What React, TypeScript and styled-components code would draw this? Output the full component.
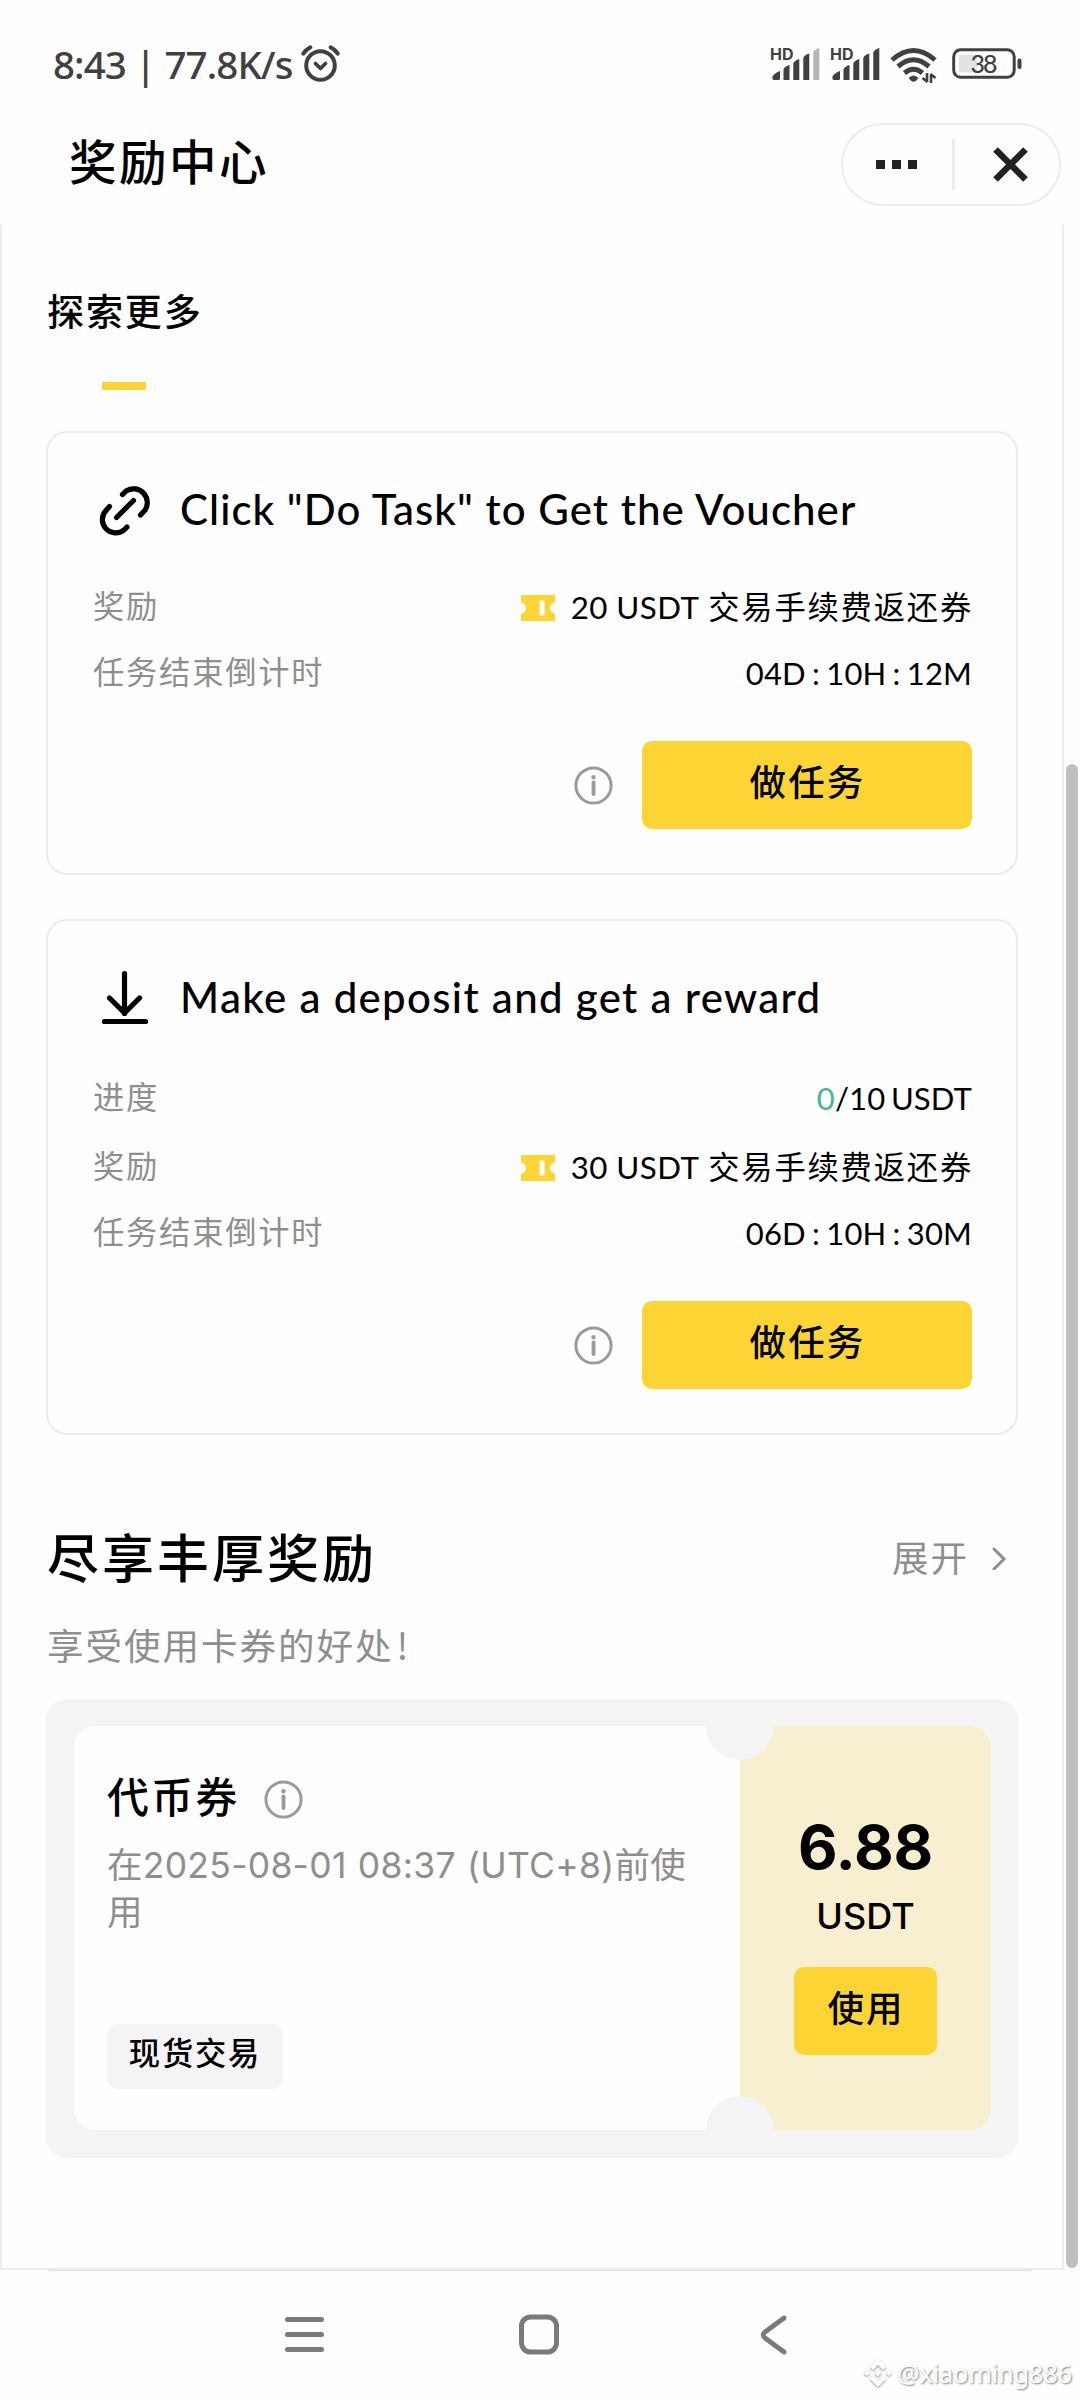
import React from "react";
import styled, { createGlobalStyle } from "styled-components";

const ui = `Lato, "Noto Sans CJK SC", sans-serif`;
const wide = `Inter, "Noto Sans CJK SC", sans-serif`;
const cjk = `"Noto Sans CJK SC", sans-serif`;

const GlobalStyle = createGlobalStyle`
  * { box-sizing: border-box; }
  body { margin: 0; background: #fefefe; }
  svg { display: block; flex: none; }
`;

const Screen = styled.div`
  width: 1080px;
  height: 2400px;
  display: flex;
  flex-direction: column;
  background: #fefefe;
  color: #000;
  font-family: ${ui};
  overflow: hidden;
  white-space: nowrap;
`;

const StatusBar = styled.header`
  height: 123px;
  padding: 36px 57px 0 53px;
  display: flex;
  justify-content: space-between;
  align-items: flex-start;
  color: #404040;
`;

const StatusLeft = styled.div`
  display: flex;
  align-items: center;
  height: 56px;
  font: 500 38.5px/56px "Noto Sans", ${cjk};
`;

const StatusClock = styled.span`
  display: inline-block;
  width: 247px;
  letter-spacing: -0.9px;
`;

const StatusRight = styled.div`
  display: flex;
  padding-top: 9px;
  align-items: flex-start;
`;

const SignalGroup = styled.span`
  display: grid;
  width: 60px;
  height: 37px;
  > * { grid-area: 1 / 1; }
`;

const HdLabel = styled.span`
  font: 700 16px/16px Inter, sans-serif;
  padding-top: 1px;
`;

const StatusSlot = styled.span<{ $right?: number }>`
  padding-top: 2px;
  margin-right: ${(p) => p.$right ?? 0}px;
`;

const HeaderBar = styled.div`
  height: 102px;
  padding: 0 19px 0 69px;
  display: flex;
  justify-content: space-between;
`;

const PageTitle = styled.h1`
  margin: 0;
  font: 500 47.5px/74px ${cjk};
  letter-spacing: 2.5px;
`;

const Capsule = styled.div`
  width: 220px;
  height: 83px;
  border: 2px solid #ececec;
  border-radius: 42px;
  display: flex;
  align-items: center;
`;

const CapsuleHalf = styled.div<{ $width: number; $pad: number }>`
  width: ${(p) => p.$width}px;
  display: flex;
  gap: 7px;
  padding-left: ${(p) => p.$pad}px;
`;

const CapsuleDot = styled.i`
  width: 9px;
  height: 9px;
  background: #222;
`;

const CapsuleDivider = styled.i`
  width: 3px;
  height: 51px;
  background: #ececec;
`;

const Viewport = styled.div`
  height: 2045px;
  display: flex;
`;

const Page = styled.main`
  width: 1064px;
  border: 2px solid #ececec;
  border-top: 0;
  padding: 56px 44px 0;
  display: flex;
  flex-direction: column;
`;

const ScrollTrack = styled.div`
  flex: 1;
  padding: 539px 2px 2px 2px;
`;

const ScrollThumb = styled.div`
  height: 1504px;
  border-radius: 6px;
  background: #bfbfbf;
`;

const Tab = styled.div`
  display: flex;
  flex-direction: column;
  align-items: center;
  width: 156px;
  height: 150px;
  gap: 43px;
`;

const TabText = styled.div`
  font: 500 37px/58px ${cjk};
  letter-spacing: 1.9px;
  width: 100%;
  padding-left: 1px;
`;

const TabBar = styled.i`
  width: 44px;
  height: 8px;
  background: #fcd535;
`;

const CardList = styled.div`
  display: flex;
  flex-direction: column;
  gap: 44px;
`;

const Card = styled.section`
  border: 2px solid #ececec;
  border-radius: 21px;
  padding: 46px 44px 44px 45px;
`;

const CardHead = styled.div`
  display: flex;
  align-items: center;
  height: 62px;
  margin-bottom: 33px;
  gap: 25px;
`;

const CardTitle = styled.h2<{ $spacing: number }>`
  margin: 0 0 2px;
  font: 500 42px/62px ${ui};
  letter-spacing: ${(p) => p.$spacing}px;
`;

const Row = styled.div<{ $height?: number }>`
  height: ${(p) => p.$height ?? 66}px;
  display: flex;
  align-items: center;
  justify-content: space-between;
  line-height: 66px;
`;

const RowLabel = styled.span`
  font: 400 31.3px/60px ${cjk};
  letter-spacing: 1.75px;
  color: #8e8e8e;
  margin-top: -4px;
`;

const RowValue = styled.span`
  display: flex;
  align-items: center;
  font-size: 31px;
`;

const Measure = styled.span<{ $gap: number }>`
  font-size: 31px;
  word-spacing: ${(p) => p.$gap}px;
  letter-spacing: 0.15px;
`;

const VoucherName = styled.span`
  margin: -2px -1px 0 16px;
  font-family: ${cjk};
  font-size: 31.3px;
  letter-spacing: 1.8px;
`;

const VoucherAmount = styled.span`
  font-family: ${ui};
  letter-spacing: 0.45px;
`;

const Done = styled.span`
  color: #4ab58f;
`;

const Actions = styled.div`
  margin-top: 35px;
  display: flex;
  justify-content: flex-end;
  align-items: center;
  gap: 29px;
`;

const Button = styled.button<{ $width: number }>`
  width: ${(p) => p.$width}px;
  height: 88px;
  padding: 0 0 9px 1px;
  border: 0;
  border-radius: 10px;
  background: #fcd535;
  color: #000;
  font: 500 36.5px/56px ${cjk};
  letter-spacing: 2.1px;
`;

const SectionHead = styled.div`
  margin-top: 82px;
  height: 80px;
  padding: 0 10px 0 1px;
  display: flex;
  align-items: center;
  justify-content: space-between;
`;

const SectionTitle = styled.h2`
  margin: -3px 0 0;
  font: 500 52px/78px ${cjk};
  letter-spacing: 3px;
`;

const Expand = styled.a`
  display: flex;
  align-items: center;
  gap: 21px;
  color: #8e8e8e;
  font: 400 36.5px/56px ${cjk};
  letter-spacing: 2px;
`;

const SectionNote = styled.p`
  margin: 18px 0 0;
  padding-left: 1px;
  height: 84px;
  font: 400 36.5px/60px ${cjk};
  letter-spacing: 2px;
  color: #8e8e8e;
`;

const Bang = styled.span`
  margin-left: 3px;
`;

const Panel = styled.section`
  background: #f4f4f4;
  border-radius: 21px;
  height: 459px;
  padding: 27px 27px 28px 28px;
  display: flex;
`;

const Coupon = styled.div`
  position: relative;
  flex: 1;
  display: flex;
  border-radius: 21px;
  overflow: hidden;
  background: #fefefe;
`;

const CouponInfo = styled.div`
  width: 666px;
  padding: 38px 0 41px 33px;
  display: flex;
  flex-direction: column;
  align-items: flex-start;
`;

const CouponName = styled.h3`
  margin: 0;
  display: flex;
  align-items: center;
  gap: 24px;
  font: 500 41.8px/62px ${cjk};
  letter-spacing: 2.5px;
  svg { margin-top: 9px; }
`;

const CouponExpiry = styled.p`
  margin: 16px 0 0;
  width: 600px;
  height: 94px;
  font: 400 35.5px/47px ${wide};
  letter-spacing: 0.27px;
  word-spacing: 1px;
  color: #8e8e8e;
  white-space: normal;
`;

const Tag = styled.span`
  margin-top: auto;
  width: 176px;
  height: 65px;
  border-radius: 10px;
  background: #f4f4f4;
  font: 500 31.3px/56px ${cjk};
  letter-spacing: 1.8px;
  text-align: center;
`;

const CouponValue = styled.div`
  flex: 1;
  background: #f8eed0;
  display: flex;
  flex-direction: column;
  align-items: center;
  padding-top: 86px;
`;

const Amount = styled.div`
  font: 700 61px/70px ${wide};
  letter-spacing: -0.2px;
`;

const Unit = styled.div`
  margin: 6px 0 23px;
  font: 500 36px/56px ${wide};
  letter-spacing: 0.1px;
`;

const Notch = styled.i<{ $bottom?: boolean }>`
  position: absolute;
  left: 632px;
  ${(p) => (p.$bottom ? "bottom" : "top")}: -34px;
  width: 68px;
  height: 68px;
  border-radius: 50%;
  background: #f4f4f4;
`;

const NavBar = styled.nav`
  position: relative;
  flex: 1;
  display: flex;
  align-items: flex-start;
  padding: 40px 0 0 281px;
  gap: 186px;
`;

const NavLine = styled.i`
  position: absolute;
  left: 49px;
  top: 0;
  width: 982px;
  height: 1px;
  background: #e2e2e2;
`;

const Watermark = styled.div`
  position: absolute;
  right: 8px;
  bottom: 9px;
  display: flex;
  align-items: center;
  gap: 5px;
  color: #fff;
  font: 400 25px/36px "Noto Sans", ${cjk};
  text-shadow: 1px 1px 2px rgba(0, 0, 0, 0.5);
  svg { filter: drop-shadow(0 1px 1px rgba(0, 0, 0, 0.45)); }
`;

const AlarmIcon = () => (
  <svg width="40" height="38" viewBox="0 0 40 38" fill="none" stroke="#404040" strokeLinecap="round" strokeLinejoin="round">
    <circle cx="20.500" cy="20.500" r="14.300" strokeWidth="4" />
    <path d="M15.500 18.500l5 5 5-5" strokeWidth="3.800" />
    <path d="M3.300 8.700c2-3 4-4.800 7-6.400M37.700 8.700c-2-3-4-4.800-7-6.400" strokeWidth="4" />
  </svg>
);

const HdSignal = ({ weak }: { weak?: boolean }) => (
  <SignalGroup>
    <HdLabel>HD</HdLabel>
    <svg width="60" height="35" viewBox="0 9 60 35" fill="#404040">
      <path d="M2.500 42.500V40.500q2-3.500 7.500-5.500V42.500a1.500 1.500 0 0 1-1.500 1.500H4a1.500 1.500 0 0 1-1.500-1.500z" />
      <path d="M13.500 33.500q1-3 6-4.500V44h-6zM23.300 27.500q1-3 6-4.500V44h-6zM33.300 22q1-3 6-4.500V44h-6z" />
      <path d="M43.300 16.500q1-3 6-4.500V44h-6z" fill={weak ? "#b4b4b4" : "#404040"} />
    </svg>
  </SignalGroup>
);

const WifiIcon = () => (
  <svg width="48" height="38" viewBox="0 0 48 38" fill="none" stroke="#404040" strokeWidth="5">
    <path d="M2 13Q23.500 -6 45 13" />
    <path d="M8 19.500Q23.500 6 39 19.500" />
    <path d="M14.500 26Q23.500 18.500 32.500 26" />
    <path d="M18.500 31q5-5 10 0l-2.500 2.800q-2.500 2-5 0z" fill="#404040" stroke="none" />
    <path d="M37 26v9M37.500 35l-5-4M41 36v-9M40.500 27l5 4" strokeWidth="2.600" />
  </svg>
);

const BatteryIcon = () => (
  <svg width="71" height="33" viewBox="0 -1 71 33">
    <rect x="1.700" y="1.700" width="60.500" height="27.600" rx="7" fill="none" stroke="#404040" strokeWidth="3" />
    <rect x="7" y="6.500" width="18" height="18" rx="3" fill="#e2e2e2" />
    <rect x="65.500" y="10.500" width="4" height="10.500" rx="2" fill="#404040" />
    <text x="32" y="24.500" textAnchor="middle" fontFamily="Lato, sans-serif" fontWeight="500" fontSize="25" textLength="27" fill="#404040">38</text>
  </svg>
);

const LinkIcon = () => (
  <svg width="62" height="62" viewBox="0 0 62 62" fill="none" stroke="#000" strokeWidth="5.200" strokeLinecap="round">
    <path d="M29.500 15.500l4-3.800a13.800 13.800 0 0 1 18.500 19.500l-4.500 4.800" />
    <path d="M16.500 27.500l-3 3.500a13.300 13.300 0 0 0 17.500 20l3-3" />
    <path d="M23.500 38.500l17-17" />
  </svg>
);

const DepositIcon = () => (
  <svg width="62" height="62" viewBox="0 0 62 62" fill="none" stroke="#000" strokeWidth="5.200" strokeLinecap="round" strokeLinejoin="round">
    <path d="M31.500 6.500v40M16.500 31l15 15 15-15M11.500 54.500h41" />
  </svg>
);

const TicketIcon = () => (
  <svg width="34" height="28" viewBox="0 -2 34 28" fill="#fcd535">
    <path fillRule="evenodd" d="M0 0h34v7.500q-5 1-5 5.500t5 5.500V26H0v-7.500q5-1 5-5.500T0 7.500zM18.500 5.500v15h5v-15z" />
  </svg>
);

const InfoIcon = () => (
  <svg width="39" height="39" viewBox="0 0 39 39">
    <circle cx="19.500" cy="19.500" r="17.600" fill="none" stroke="#9a9a9a" strokeWidth="3" />
    <path d="M19.500 16.500v11.500" stroke="#9a9a9a" strokeWidth="3.800" strokeLinecap="round" />
    <circle cx="19.500" cy="11.200" r="2.200" fill="#9a9a9a" />
  </svg>
);

const BinanceIcon = () => (
  <svg width="28" height="28" viewBox="0 0 28 28" fill="#fff">
    <path d="M14 0l8 8-3 3-5-5-5 5-3-3zM14 28l8-8-3-3-5 5-5-5-3 3zM14 10.500l3.500 3.500-3.500 3.500-3.500-3.500zM3 11l3 3-3 3-3-3zM25 11l3 3-3 3-3-3z" />
  </svg>
);

interface TaskProps {
  icon: React.ReactNode;
  title: string;
  titleSpacing: number;
  progress?: { done: string; total: string };
  amount: string;
  countdown: string;
}

const TaskCard = ({ icon, title, titleSpacing, progress, amount, countdown }: TaskProps) => (
  <Card>
    <CardHead>
      {icon}
      <CardTitle $spacing={titleSpacing}>{title}</CardTitle>
    </CardHead>
    {progress && (
      <Row $height={72}>
        <RowLabel>进度</RowLabel>
        <Measure $gap={-2.5}>
          <Done>{progress.done}</Done>/{progress.total}
        </Measure>
      </Row>
    )}
    <Row>
      <RowLabel>奖励</RowLabel>
      <RowValue>
        <TicketIcon />
        <VoucherName>
          <VoucherAmount>{amount}</VoucherAmount> 交易手续费返还券
        </VoucherName>
      </RowValue>
    </Row>
    <Row>
      <RowLabel>任务结束倒计时</RowLabel>
      <Measure $gap={-1.8}>{countdown}</Measure>
    </Row>
    <Actions>
      <InfoIcon />
      <Button $width={330}>做任务</Button>
    </Actions>
  </Card>
);

export default function App() {
  return (
    <Screen>
      <GlobalStyle />
      <StatusBar>
        <StatusLeft>
          <StatusClock>8:43 | 77.8K/s</StatusClock>
          <AlarmIcon />
        </StatusLeft>
        <StatusRight>
          <HdSignal weak />
          <HdSignal />
          <StatusSlot $right={14}>
            <WifiIcon />
          </StatusSlot>
          <StatusSlot>
            <BatteryIcon />
          </StatusSlot>
        </StatusRight>
      </StatusBar>
      <HeaderBar>
        <PageTitle>奖励中心</PageTitle>
        <Capsule>
          <CapsuleHalf $width={109} $pad={33}>
            <CapsuleDot />
            <CapsuleDot />
            <CapsuleDot />
          </CapsuleHalf>
          <CapsuleDivider />
          <CapsuleHalf $width={104} $pad={38}>
            <svg width="35" height="35" viewBox="0 0 35 35" stroke="#222" strokeWidth="6.500">
              <path d="M2.500 2.500l30 30M32.500 2.500l-30 30" />
            </svg>
          </CapsuleHalf>
        </Capsule>
      </HeaderBar>
      <Viewport>
        <Page>
          <Tab>
            <TabText>探索更多</TabText>
            <TabBar />
          </Tab>
          <CardList>
            <TaskCard
              icon={<LinkIcon />}
              title={'Click "Do Task" to Get the Voucher'}
              titleSpacing={1.05}
              amount="20 USDT"
              countdown="04D : 10H : 12M"
            />
            <TaskCard
              icon={<DepositIcon />}
              title="Make a deposit and get a reward"
              titleSpacing={1.32}
              progress={{ done: "0", total: "10 USDT" }}
              amount="30 USDT"
              countdown="06D : 10H : 30M"
            />
          </CardList>
          <SectionHead>
            <SectionTitle>尽享丰厚奖励</SectionTitle>
            <Expand>
              展开
              <svg width="18" height="26" viewBox="0 0 18 26" fill="none" stroke="#8e8e8e" strokeWidth="3" strokeLinecap="round">
                <path d="M4 5l10 10-10 10" />
              </svg>
            </Expand>
          </SectionHead>
          <SectionNote>
            享受使用卡券的好处<Bang>!</Bang>
          </SectionNote>
          <Panel>
            <Coupon>
              <CouponInfo>
                <CouponName>
                  代币券
                  <InfoIcon />
                </CouponName>
                <CouponExpiry>在2025-08-01 08:37 (UTC+8)前使用</CouponExpiry>
                <Tag>现货交易</Tag>
              </CouponInfo>
              <CouponValue>
                <Amount>6.88</Amount>
                <Unit>USDT</Unit>
                <Button $width={143}>使用</Button>
              </CouponValue>
              <Notch />
              <Notch $bottom />
            </Coupon>
          </Panel>
        </Page>
        <ScrollTrack>
          <ScrollThumb />
        </ScrollTrack>
      </Viewport>
      <NavBar>
        <NavLine />
        <svg width="46" height="50" viewBox="0 0 46 50" fill="none" stroke="#7a7a7a" strokeWidth="5" strokeLinecap="round">
          <path d="M6.500 9.500h34M6.500 24.500h34M6.500 39.500h34" />
        </svg>
        <svg width="50" height="50" viewBox="0 0 50 50" fill="none" stroke="#7a7a7a" strokeWidth="5">
          <rect x="8.500" y="7" width="35" height="35" rx="9" />
        </svg>
        <svg width="50" height="50" viewBox="0 0 50 50" fill="none" stroke="#7a7a7a" strokeWidth="4.800" strokeLinecap="round" strokeLinejoin="round">
          <path d="M35 8L16 22q-3.500 3 0 6L35 42" />
        </svg>
        <Watermark>
          <BinanceIcon />
          @xiaoming886
        </Watermark>
      </NavBar>
    </Screen>
  );
}
